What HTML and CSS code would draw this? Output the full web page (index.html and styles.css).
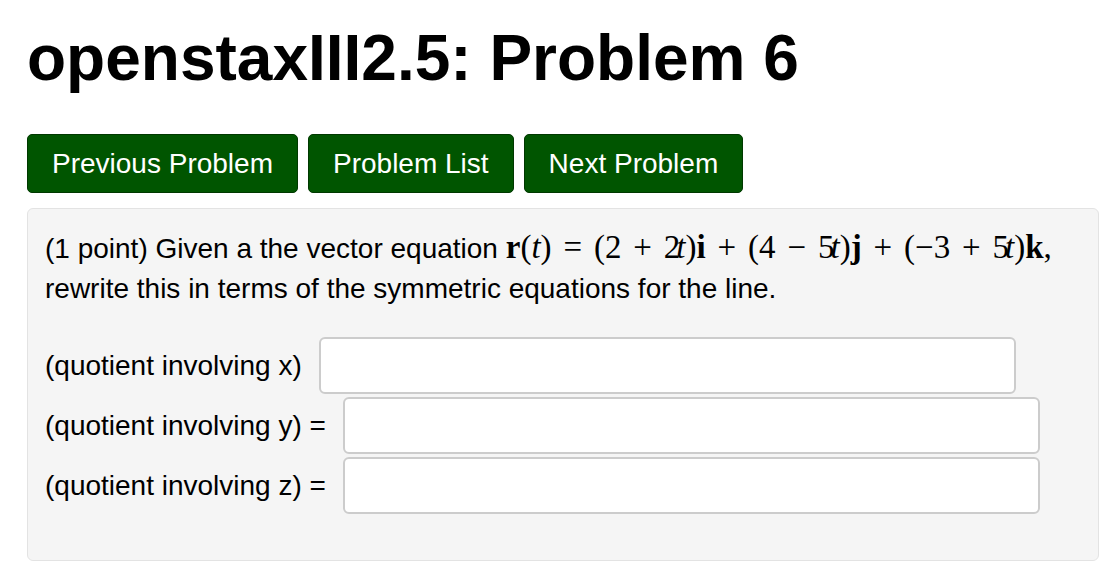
FILE: index.html
```html
<!DOCTYPE html>
<html lang="en">
<head>
  <meta charset="UTF-8">
  <title>openstaxIII2.5: Problem 6</title>
  <link rel="stylesheet" href="styles.css">
</head>
<body>
  <div class="page">
    <h1 class="problem-title">openstaxIII2.5: Problem 6</h1>

    <div class="nav-buttons">
      <a class="nav-btn" href="#">Previous Problem</a>
      <a class="nav-btn" href="#">Problem List</a>
      <a class="nav-btn" href="#">Next Problem</a>
    </div>

    <div class="problem-box">
      <p class="problem-text">
        (1 point) Given a the vector equation
        <span class="math"><b>r</b>(<i>t</i>)<span class="mo">=</span>(2<span class="mo">+</span>2<i class="tt">t</i>)<b>i</b><span class="mo">+</span>(4<span class="mo">&minus;</span>5<i class="tt">t</i>)<b>j</b><span class="mo">+</span>(&minus;3<span class="mo">+</span>5<i class="tt">t</i>)<b>k</b>,</span>
        rewrite this in terms of the symmetric equations for the line.
      </p>

      <div class="answers">
        <div class="answer-row">
          <label for="ans-x">(quotient involving x)</label>
          <input type="text" id="ans-x">
        </div>
        <div class="answer-row">
          <label for="ans-y">(quotient involving y) =</label>
          <input type="text" id="ans-y">
        </div>
        <div class="answer-row">
          <label for="ans-z">(quotient involving z) =</label>
          <input type="text" id="ans-z">
        </div>
      </div>
    </div>
  </div>
</body>
</html>
```

FILE: styles.css
```css
* {
  margin: 0;
  padding: 0;
  box-sizing: border-box;
}

body {
  font-family: "Liberation Sans", Arial, sans-serif;
  color: #000;
  background: #fff;
}

.page {
  padding: 0 8px 0 27px;
}

.problem-title {
  font-size: 64px;
  font-weight: 700;
  line-height: 1;
  padding-top: 26px;
}

.nav-buttons {
  display: flex;
  gap: 10px;
  margin-top: 44px;
}

.nav-btn {
  display: block;
  height: 59px;
  line-height: 57px;
  padding: 0 24px;
  background: #005500;
  border: 1px solid #003800;
  border-radius: 5px;
  color: #fff;
  font-size: 28px;
  text-decoration: none;
}

.problem-box {
  margin-top: 15px;
  background: #f5f5f5;
  border: 1px solid #e3e3e3;
  border-radius: 6px;
  padding: 20px 17px 46px;
}

.problem-text {
  font-size: 28px;
  line-height: 40px;
}

.math {
  font-family: "Liberation Serif", "Times New Roman", serif;
  font-size: 33px;
  line-height: 1;
  white-space: nowrap;
}

.math i {
  font-style: italic;
}

.math .mo {
  margin: 0 0.36em;
}

.math .tt {
  margin-left: -0.12em;
}

.answers {
  margin-top: 28px;
  display: flex;
  flex-direction: column;
  gap: 3px;
}

.answer-row {
  display: flex;
  align-items: center;
  gap: 17px;
  font-size: 28px;
}

.answer-row input {
  width: 697px;
  height: 57px;
  border: 2px solid #cccccc;
  border-radius: 6px;
  background: #fff;
}
```
